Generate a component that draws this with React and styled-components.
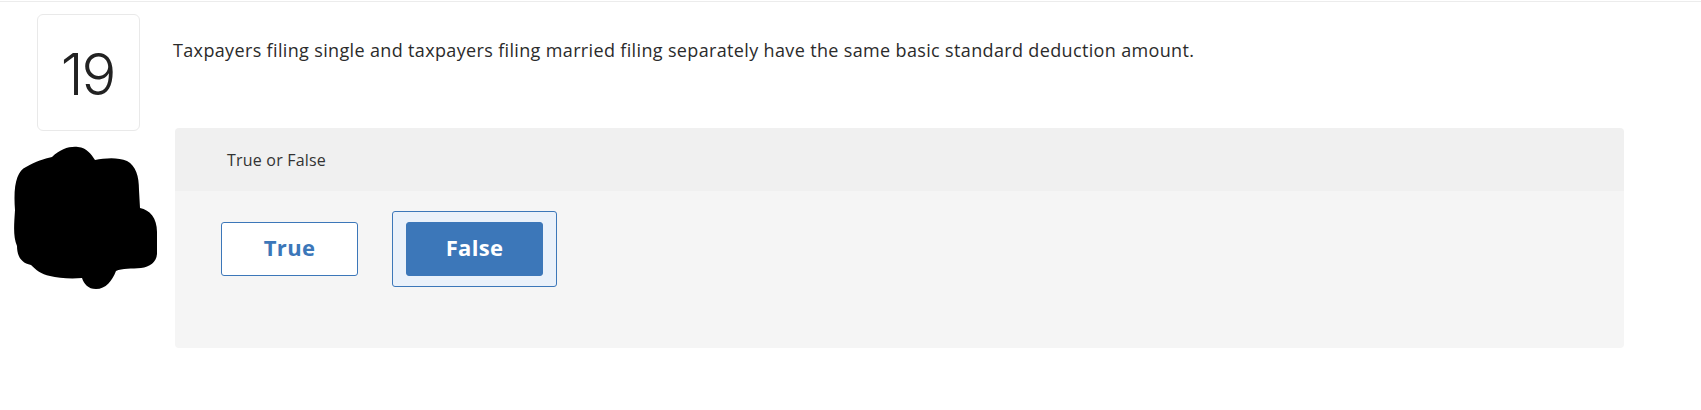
import React from 'react';
import styled, { createGlobalStyle } from 'styled-components';

const GlobalStyle = createGlobalStyle`
  html, body {
    margin: 0;
    padding: 0;
    background: #fff;
  }
  body {
    font-family: "Open Sans", Lato, Arial, sans-serif;
    color: #2b2b2b;
  }
`;

const Page = styled.div`
  margin-top: 1px;
  border-top: 1px solid #ececec;
  height: 408px;
  box-sizing: border-box;
`;

const QuestionRow = styled.div`
  display: flex;
  align-items: flex-start;
  padding: 12px 0 0 37px;
`;

const LeftColumn = styled.div`
  position: relative;
  flex-shrink: 0;
  width: 103px;
`;

const NumberBox = styled.div`
  box-sizing: border-box;
  width: 103px;
  height: 117px;
  border: 1px solid #e9e9e9;
  border-radius: 6px;
  display: flex;
  align-items: center;
  justify-content: center;
  font-family: Inter, "Open Sans", Arial, sans-serif;
  font-size: 58px;
  font-weight: 300;
  letter-spacing: -2px;
  color: #222;
  padding: 2px 2px 0 0;
`;

const Redaction = styled.svg`
  position: absolute;
  left: -37px;
  top: 126px;
  width: 160px;
  height: 160px;
`;

const Content = styled.div`
  margin-left: 35px;
  width: 1449px;
`;

const QuestionText = styled.p`
  margin: 24px 0 0 -2px;
  font-size: 18px;
  line-height: 24px;
  letter-spacing: 0.35px;
  color: #2b2b2b;
`;

const Panel = styled.div`
  margin-top: 66px;
  border-radius: 4px;
  overflow: hidden;
`;

const PanelHeader = styled.div`
  height: 63px;
  background: #f0f0f0;
  display: flex;
  align-items: center;
  padding-left: 52px;
  font-size: 16px;
  letter-spacing: 0.2px;
  color: #333;
`;

const PanelBody = styled.div`
  height: 157px;
  box-sizing: border-box;
  background: #f5f5f5;
  padding: 20px 0 0 32px;
`;

const ChoiceRow = styled.div`
  display: flex;
  align-items: center;
  gap: 20px;
`;

const ChoiceFrame = styled.div`
  padding: 10px 13px;
  border: 1px solid ${p => (p.$selected ? '#3c77b9' : 'transparent')};
  border-radius: 3px;
  background: ${p => (p.$selected ? '#eaf1fa' : 'transparent')};
`;

const ChoiceButton = styled.button`
  box-sizing: border-box;
  width: 137px;
  height: 54px;
  border: 1px solid #3c77b9;
  border-radius: 3px;
  background: ${p => (p.$selected ? '#3c77b9' : '#fff')};
  color: ${p => (p.$selected ? '#fff' : '#3c77b9')};
  font-family: "Open Sans", Lato, Arial, sans-serif;
  font-size: 22px;
  font-weight: 700;
  letter-spacing: 0.3px;
  cursor: pointer;
  padding: 0 0 4px;
`;

const choices = [
  { label: 'True', selected: false },
  { label: 'False', selected: true },
];

export default function App() {
  return (
    <>
      <GlobalStyle />
      <Page>
        <QuestionRow>
          <LeftColumn>
            <NumberBox>19</NumberBox>
            <Redaction viewBox="0 0 160 160">
              <path
                fill="#000"
                d="M15,70 C13,45 17,31 26,27 C36,21 44,19 52,17 C60,9 70,6 78,7 C87,8 91,14 95,20 C105,18 118,17 127,21 C136,26 139,36 139,50 L140,68 C150,70 157,78 157,92 L157,113 C157,122 150,127 141,128 C132,129 122,128 116,131 C112,141 106,149 96,149 C88,149 84,144 82,138 C70,139 58,138 50,136 C41,134 36,130 31,125 C21,123 17,116 17,106 C13,96 14,86 15,70 Z"
              />
            </Redaction>
          </LeftColumn>
          <Content>
            <QuestionText>
              Taxpayers filing single and taxpayers filing married filing separately have the same basic standard deduction amount.
            </QuestionText>
            <Panel>
              <PanelHeader>True or False</PanelHeader>
              <PanelBody>
                <ChoiceRow>
                  {choices.map(c => (
                    <ChoiceFrame key={c.label} $selected={c.selected}>
                      <ChoiceButton $selected={c.selected}>{c.label}</ChoiceButton>
                    </ChoiceFrame>
                  ))}
                </ChoiceRow>
              </PanelBody>
            </Panel>
          </Content>
        </QuestionRow>
      </Page>
    </>
  );
}
